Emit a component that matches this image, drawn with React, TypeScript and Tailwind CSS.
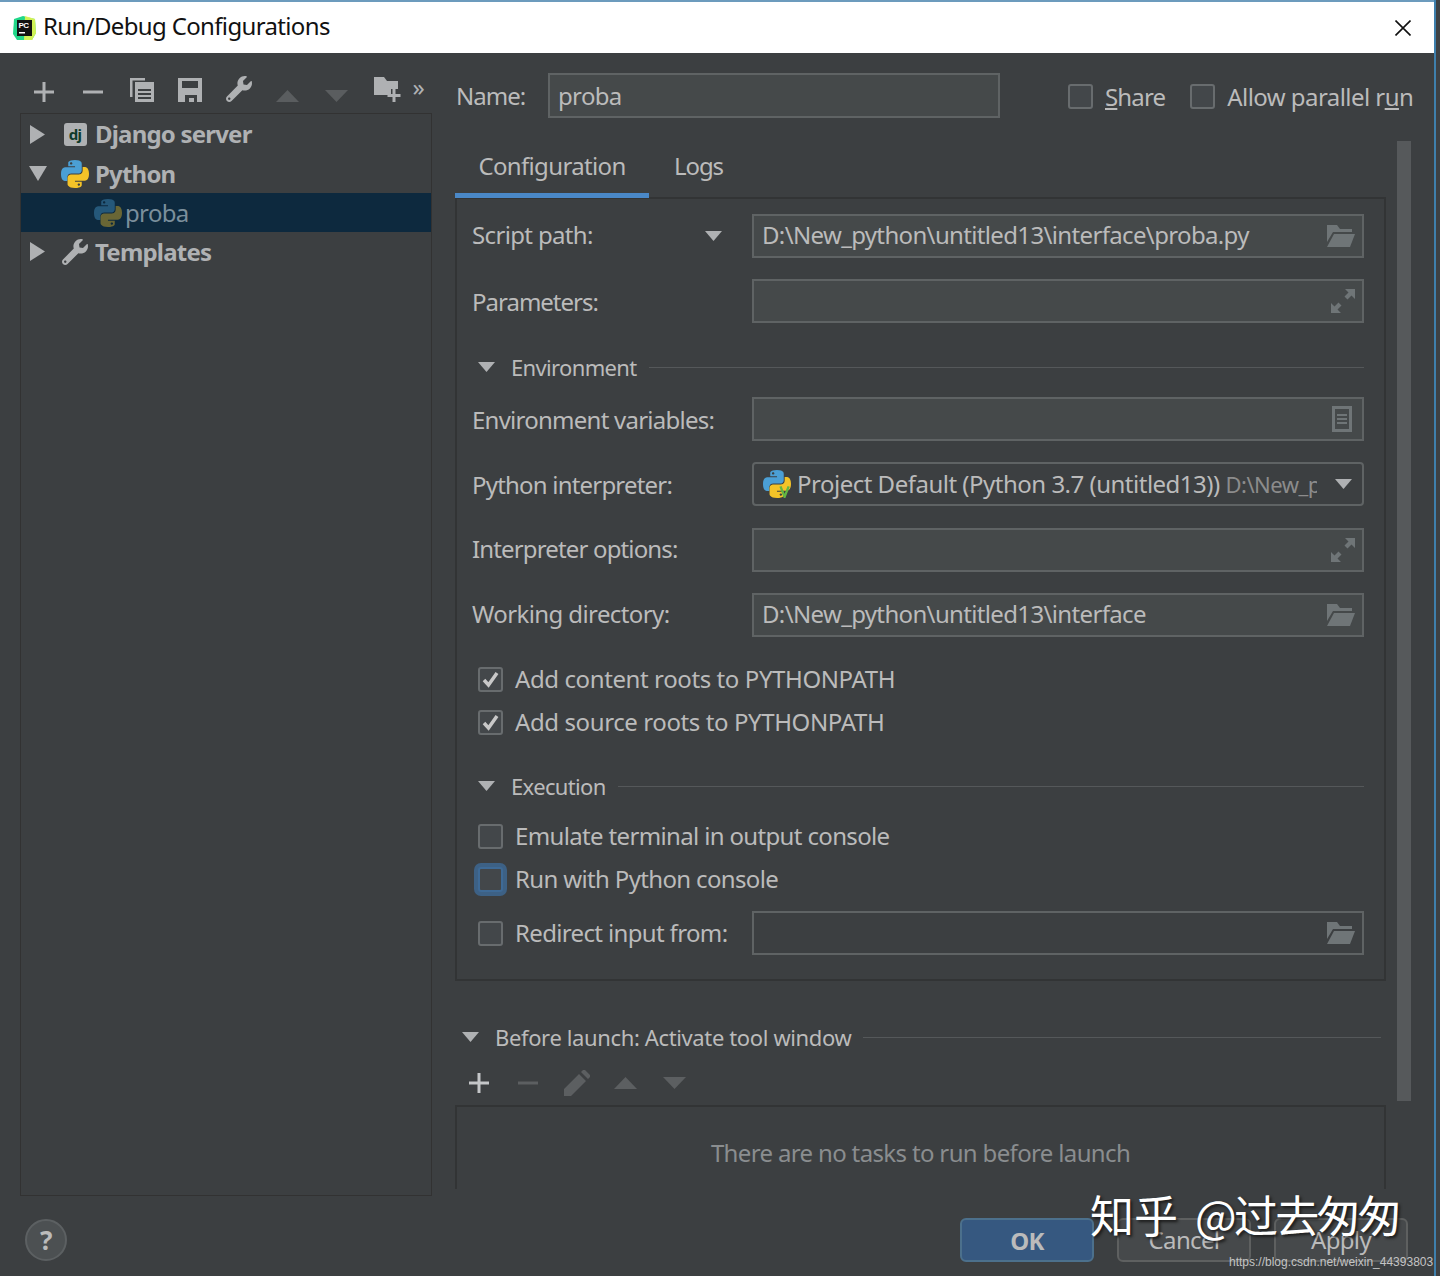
import React from "react";
import { FaWrench } from "react-icons/fa";

const BLUE = "M11.914 0C5.82 0 6.2 2.656 6.2 2.656l.007 2.752h5.814v.826H3.9S0 5.789 0 11.969c0 6.18 3.403 5.96 3.403 5.96h2.03v-2.867s-.109-3.42 3.35-3.42h5.766s3.24.052 3.24-3.148V3.202S18.28 0 11.913 0zM8.708 1.85c.578 0 1.046.47 1.046 1.052 0 .581-.468 1.051-1.046 1.051-.579 0-1.046-.47-1.046-1.051 0-.582.467-1.052 1.046-1.052z";
const YELLOW = "M12.087 24c6.092 0 5.712-2.656 5.712-2.656l-.007-2.752h-5.814v-.826h8.123s3.9.445 3.9-5.735c0-6.18-3.404-5.96-3.404-5.96h-2.03v2.867s.109 3.42-3.35 3.42H8.85s-3.24-.052-3.24 3.148v5.292S5.72 24 12.087 24zm3.206-1.85c-.578 0-1.046-.47-1.046-1.052 0-.581.468-1.051 1.046-1.051.579 0 1.046.47 1.046 1.051 0 .582-.467 1.052-1.046 1.052z";

function Py({ size = 28, dim = false, v = false }: { size?: number; dim?: boolean; v?: boolean }) {
  return (
    <svg width={size} height={size} viewBox="0 0 24 24" className={dim ? "shrink-0 opacity-40" : "shrink-0"}>
      <path d={BLUE} fill="#4b9fd5" />
      <path d={YELLOW} fill="#f4c328" />
      {v && <path d="M15 14l3.5 9 3.5-9" fill="none" stroke="#62b543" strokeWidth="2" />}
    </svg>
  );
}

function Tri({ dir, c = "#afb1b3", w = 18, h = 14 }: { dir: "up" | "down" | "right"; c?: string; w?: number; h?: number }) {
  const p = dir === "up" ? "M0 14L9 0l9 14z" : dir === "down" ? "M0 0l18 0-9 14z" : "M0 0l18 9.5L0 19z";
  return (
    <svg width={w} height={h} viewBox={dir === "right" ? "0 0 18 19" : "0 0 18 14"} preserveAspectRatio="none" className="shrink-0">
      <path d={p} fill={c} />
    </svg>
  );
}

function Plus({ c = "#afb1b3" }: { c?: string }) {
  return (
    <svg width="20" height="20" viewBox="0 0 20 20"><path d="M8.5 0h3v8.5H20v3h-8.5V20h-3v-8.5H0v-3h8.5z" fill={c} /></svg>
  );
}
function Minus({ c = "#afb1b3" }: { c?: string }) {
  return (
    <svg width="20" height="20" viewBox="0 0 20 20"><path d="M0 8.5h20v3H0z" fill={c} /></svg>
  );
}
function Copy() {
  return (
    <svg width="24" height="24" viewBox="0 0 24 24">
      <path d="M0 0h15v2.5H2.500V19H0z" fill="#afb1b3" />
      <path d="M5 4h19v20H5z" fill="#afb1b3" />
      <path d="M8 11h13v2H8zM8 15h13v2H8zM8 19h13v2H8z" fill="#3c3f41" />
    </svg>
  );
}
function Save() {
  return (
    <svg width="24" height="24" viewBox="0 0 24 24">
      <path fillRule="evenodd" d="M0 0h24v24H0zM4 3v7h16V3zM7 17v7h12v-7z" fill="#afb1b3" />
      <path d="M11 20h5v4h-5z" fill="#afb1b3" />
    </svg>
  );
}
function FolderPlus() {
  return (
    <svg width="28" height="26" viewBox="0 0 28 26">
      <path d="M0 1h10l3 4h11v8h-7v6H0z" fill="#afb1b3" />
      <path d="M18.500 13h3v5h5v3h-5v5h-3v-5h-5v-3h5z" fill="#afb1b3" />
    </svg>
  );
}
function FolderOpen() {
  return (
    <svg width="28" height="22" viewBox="0 0 28 22" className="shrink-0">
      <path d="M0 0h10l3 4h12v3H6L0 17z" fill="#6f7577" />
      <path d="M7 9h21l-5 13H0z" fill="#6f7577" />
    </svg>
  );
}
function Expand() {
  return (
    <svg width="24" height="24" viewBox="0 0 24 24" className="shrink-0">
      <path d="M14 0h10v10l-3.500-3.500-4 4-3-3 4-4zM0 14v10h10l-3.500-3.500 4-4-3-3-4 4z" fill="#6f7577" />
    </svg>
  );
}
function Doc() {
  return (
    <svg width="20" height="26" viewBox="0 0 20 26" className="shrink-0">
      <path fillRule="evenodd" d="M0 0h20v26H0zM3 3v20h14V3z" fill="#6f7577" />
      <path d="M5 8h10v2H5zM5 12h10v2H5zM5 16h10v2H5z" fill="#6f7577" />
    </svg>
  );
}
function Pencil() {
  return (
    <svg width="26" height="26" viewBox="0 0 26 26">
      <path d="M0 26v-7L15 4l7 7L7 26zM17 2l2-2q1-.5 2 0l5 5q.5 1 0 2l-2 2z" fill="#5c5f61" />
    </svg>
  );
}

function Field({ value, icon, flat = false }: { value?: string; icon?: React.ReactNode; flat?: boolean }) {
  return (
    <div className={`w-[612px] h-[44px] shrink-0 border-2 border-[#5f6364] flex items-center justify-between pl-[8px] pr-[7px] text-[24px] text-[#bbbbbb] ${flat ? "bg-[#3c3f41]" : "bg-[#45494a]"}`}>
      <span className="pb-[2px]">{value}</span>
      {icon}
    </div>
  );
}

function Check({ checked = false, focus = false }: { checked?: boolean; focus?: boolean }) {
  return (
    <span className={`w-[25px] h-[25px] shrink-0 rounded-[3px] bg-[#43474a] border-2 flex items-center justify-center ${focus ? "border-[#3e6a96] shadow-[0_0_0_4px_#3d6185]" : "border-[#686c6e]"}`}>
      {checked && (
        <svg width="17" height="17" viewBox="0 0 17 17"><path d="M2 9l4.500 5L15 2" fill="none" stroke="#c8c8c8" strokeWidth="3.500" /></svg>
      )}
    </span>
  );
}

function Section({ title, className = "" }: { title: string; className?: string }) {
  return (
    <div className={`h-[24px] flex items-center text-[22px] text-[#bbbbbb] ${className}`}>
      <Tri dir="down" w={17} h={10} />
      <span className="ml-[16px]">{title}</span>
      <span className="flex-1 h-[1px] bg-[#55585a] ml-[12px]" />
    </div>
  );
}

function FormRow({ label, children, className = "", labelClass = "" }: { label: React.ReactNode; children: React.ReactNode; className?: string; labelClass?: string }) {
  return (
    <div className={`flex items-center ${className}`}>
      <div className={`w-[280px] shrink-0 text-[24px] text-[#bbbbbb] ${labelClass}`}>{label}</div>
      {children}
    </div>
  );
}

function CheckRow({ label, checked, focus, className = "" }: { label: string; checked?: boolean; focus?: boolean; className?: string }) {
  return (
    <div className={`h-[26px] pl-[6px] flex items-center gap-[12px] text-[24px] text-[#bbbbbb] ${className}`}>
      <Check checked={checked} focus={focus} />
      <span>{label}</span>
    </div>
  );
}

function TreeRow({ arrow, icon, label, bold = true, selected = false, indent = 9, first = false }: { arrow?: "right" | "down"; icon: React.ReactNode; label: string; bold?: boolean; selected?: boolean; indent?: number; first?: boolean }) {
  return (
    <div className={`h-[39px] flex items-center text-[24px] ${selected ? "bg-[#0d293e] text-[#7b8f9c]" : "text-[#afb1b3]"} ${bold ? "font-bold tracking-[-0.8px]" : ""}`}>
      <span className="w-[41px] shrink-0 flex justify-center pr-[8px]">
        {arrow && <Tri dir={arrow} w={arrow === "right" ? 15 : 18} h={arrow === "right" ? 19 : 15} />}
      </span>
      {indent > 9 && <span className="w-[33px] shrink-0" />}
      <span className="w-[26px] shrink-0 flex justify-center">{icon}</span>
      <span className={indent > 9 ? "ml-[4px]" : first ? "ml-[7px] pb-[2px]" : "ml-[7px]"}>{label}</span>
    </div>
  );
}

function ToolSlot({ children }: { children: React.ReactNode }) {
  return <span className="w-[48.700px] shrink-0 flex items-center justify-center">{children}</span>;
}

function Button({ label, primary = false }: { label: string; primary?: boolean }) {
  return (
    <div className={`w-[134px] h-[44px] rounded-[6px] border-2 flex items-center justify-center text-[24px] text-[#bbbbbb] ${primary ? "bg-[#365880] border-[#4c708c] font-bold pt-[2px]" : "bg-[#46494b] border-[#5e6060]"}`}>
      {label}
    </div>
  );
}

export default function App() {
  return (
    <div className="relative w-[1440px] h-[1276px] overflow-hidden flex bg-[#3c3f41] font-['Noto_Sans','Open_Sans',sans-serif] tracking-[-0.65px]">
      <div className="w-[1434px] h-full shrink-0 flex flex-col">
        <div className="h-[53px] shrink-0 bg-white border-t-2 border-[#6c9bbd] flex items-center justify-between pl-[13px] pr-[23px]">
          <div className="flex items-center gap-[8px] text-[24px] text-[#111111]">
            <svg width="23" height="24" viewBox="0 0 23 24" className="shrink-0">
              <path d="M1 3l9-3 12 3 1 14-4 7H4L0 18z" fill="#21d789" />
              <path d="M12 0l10 3 1 14-4 7h-8z" fill="#fcf84a" opacity=".8" />
              <path d="M4 4h15v16H4z" fill="#111111" />
              <text x="5.500" y="12" fontSize="8" fontWeight="700" fill="#ffffff" fontFamily="Liberation Sans, sans-serif">PC</text>
              <path d="M6 16h6v1.500H6z" fill="#ffffff" />
            </svg>
            <span className="pb-[4px] -ml-[1px]">Run/Debug Configurations</span>
          </div>
          <svg width="16" height="16" viewBox="0 0 16 16"><path d="M.5.5l15 15M15.500.5l-15 15" stroke="#111111" strokeWidth="1.600" fill="none" /></svg>
        </div>

        <div className="h-[1143px] shrink-0 flex">
          <div className="w-[432px] shrink-0 pl-[20px] flex flex-col">
            <div className="h-[60px] shrink-0 flex items-end pb-[11px]">
              <ToolSlot><Plus /></ToolSlot>
              <ToolSlot><Minus /></ToolSlot>
              <ToolSlot><Copy /></ToolSlot>
              <ToolSlot><Save /></ToolSlot>
              <ToolSlot><FaWrench size={26} color="#afb1b3" /></ToolSlot>
              <ToolSlot><Tri dir="up" c="#5a5d5f" w={23} h={12} /></ToolSlot>
              <ToolSlot><Tri dir="down" c="#5a5d5f" w={23} h={12} /></ToolSlot>
              <span className="w-[48.700px] shrink-0 flex items-center justify-center pl-[5px] pt-[5px]"><FolderPlus /></span>
              <span className="ml-[3px] text-[24px] leading-[24px] text-[#afb1b3] pb-[3px]">»</span>
            </div>
            <div className="h-[1083px] shrink-0 border border-[#323232] pt-[1px]">
              <TreeRow first arrow="right" icon={<span className="w-[23px] h-[23px] rounded-[3px] bg-[#afb1b3] flex items-center justify-center text-[15px] leading-none font-bold text-[#0f3b2a]">dj</span>} label="Django server" />
              <TreeRow arrow="down" icon={<Py />} label="Python" />
              <TreeRow selected bold={false} indent={40} icon={<Py dim />} label="proba" />
              <TreeRow arrow="right" icon={<FaWrench size={26} color="#afb1b3" />} label="Templates" />
            </div>
          </div>

          <div className="flex-1 min-w-0 pl-[23px] pt-[20px] flex flex-col">
            <div className="h-[45px] shrink-0 flex items-center text-[24px] text-[#bbbbbb]">
              <span className="w-[93px] shrink-0 pl-[1px] tracking-[-1px]">Name:</span>
              <div className="w-[452px] h-[45px] shrink-0 bg-[#45494a] border-2 border-[#5f6364] flex items-center pl-[8px]">proba</div>
              <div className="ml-[68px] flex items-center gap-[12px] pt-[2px]"><Check /><span className="tracking-[-0.85px]"><span className="underline">S</span>hare</span></div>
              <div className="ml-[25px] flex items-center gap-[12px] pt-[2px]"><Check /><span className="tracking-[-0.55px]">Allow parallel r<span className="underline">u</span>n</span></div>
            </div>

            <div className="flex flex-1 min-h-0 mt-[22px]">
              <div className="w-[931px] shrink-0">
                <div className="h-[58px] flex text-[24px] text-[#bbbbbb]">
                  <div className="w-[194px] border-b-[5px] border-[#4a88c7] flex justify-center pt-[8px]">Configuration</div>
                  <div className="ml-[25px] pt-[8px] tracking-[-1.100px]">Logs</div>
                </div>
                <div className="border-2 border-t-[2px] border-[#323435] pt-[15px] pb-[24px] pl-[15px] pr-[20px] -mt-[1px]">
                  <FormRow label={<span className="flex items-center justify-between pr-[30px]"><span className="pb-[2px]">Script path:</span><Tri dir="down" w={17} h={10} /></span>}>
                    <Field value="D:\New_python\untitled13\interface\proba.py" icon={<FolderOpen />} />
                  </FormRow>
                  <FormRow label="Parameters:" labelClass="pt-[2px] tracking-[-1px]" className="mt-[21px]"><Field icon={<Expand />} /></FormRow>
                  <Section title="Environment" className="mt-[32px] pl-[6px]" />
                  <FormRow label="Environment variables:" labelClass="pt-[2px] tracking-[-0.75px]" className="mt-[18px]"><Field icon={<span className="pr-[3px]"><Doc /></span>} /></FormRow>
                  <FormRow label="Python interpreter:" labelClass="pt-[2px] tracking-[-0.8px]" className="mt-[21px]">
                    <div className="w-[612px] h-[44px] shrink-0 rounded-[4px] bg-[#3c3f41] border-2 border-[#5f6364] flex items-center pl-[9px] pr-[10px] text-[24px] text-[#bbbbbb]">
                      <Py size={28} v />
                      <div className="flex-1 min-w-0 overflow-hidden whitespace-nowrap pl-[6px] tracking-[-0.5px]">
                        Project Default (Python 3.7 (untitled13)) <span className="text-[22px] text-[#8c8c8c]">D:\New_python</span>
                      </div>
                      <span className="ml-[18px]"><Tri dir="down" w={17} h={10} /></span>
                    </div>
                  </FormRow>
                  <FormRow label="Interpreter options:" labelClass="pb-[2px] tracking-[-0.85px]" className="mt-[22px]"><Field icon={<Expand />} /></FormRow>
                  <FormRow label="Working directory:" labelClass="pb-[2px] tracking-[-0.6px]" className="mt-[21px]"><Field value="D:\New_python\untitled13\interface" icon={<FolderOpen />} /></FormRow>
                  <CheckRow checked label="Add content roots to PYTHONPATH" className="mt-[29px] tracking-[-0.4px]" />
                  <CheckRow checked label="Add source roots to PYTHONPATH" className="mt-[17px] tracking-[-0.4px]" />
                  <Section title="Execution" className="mt-[39px] pl-[6px]" />
                  <CheckRow label="Emulate terminal in output console" className="mt-[25px]" />
                  <CheckRow focus label="Run with Python console" className="mt-[17px]" />
                  <div className="mt-[19px] flex items-center pl-[6px]">
                    <div className="w-[274px] shrink-0 flex items-center gap-[12px] text-[24px] text-[#bbbbbb]"><Check /><span>Redirect input from:</span></div>
                    <Field flat icon={<FolderOpen />} />
                  </div>
                </div>
                <Section title="Before launch: Activate tool window" className="mt-[44px] pl-[7px] pr-[5px] tracking-[-0.37px]" />
                <div className="mt-[22px] h-[24px] flex items-center">
                  <ToolSlot><Plus c="#c4c6c8" /></ToolSlot>
                  <ToolSlot><Minus c="#5c5f61" /></ToolSlot>
                  <ToolSlot><Pencil /></ToolSlot>
                  <ToolSlot><Tri dir="up" c="#5c5f61" w={23} h={12} /></ToolSlot>
                  <ToolSlot><Tri dir="down" c="#5c5f61" w={23} h={12} /></ToolSlot>
                </div>
                <div className="mt-[10px] h-[84px] border-2 border-b-0 border-[#323435] flex justify-center pt-[28px] text-[24px] leading-[36px] text-[#8a8d8f]">
                  There are no tasks to run before launch
                </div>
              </div>
              <div className="ml-[11px] w-[14px] h-[960px] mt-[1px] shrink-0 bg-[#56595b]" />
            </div>
          </div>
        </div>

        <div className="flex-1 flex items-start justify-between pl-[25px] pr-[26px] pt-[22px]">
          <div className="w-[42px] h-[42px] mt-[1px] rounded-full bg-[#4c5052] border-2 border-[#5c6062] flex items-center justify-center text-[26px] font-bold text-[#bbbbbb]">?</div>
          <div className="flex gap-[23px]">
            <Button primary label="OK" />
            <Button label="Cancel" />
            <Button label="Apply" />
          </div>
        </div>
      </div>
      <div className="w-[2px] h-full shrink-0 bg-[#3f80ad]" />
      <div className="flex-1 h-full bg-[#3e4144]" />

      <div className="absolute left-[1090px] top-[1184px] flex text-[44px] leading-[60px] text-white whitespace-nowrap tracking-normal font-['Noto_Sans_CJK_SC','Noto_Sans',sans-serif] [text-shadow:2px_2px_3px_#1a1a1a]">
        <span>知乎</span>
        <span className="ml-[17px] tracking-[-2.700px]">@过去匆匆</span>
      </div>
      <div className="absolute left-[1229px] top-[1254px] text-[12px] leading-[16px] text-[#c4c4c4] whitespace-nowrap tracking-normal font-['Liberation_Sans',sans-serif]">https://blog.csdn.net/weixin_44393803</div>
    </div>
  );
}
